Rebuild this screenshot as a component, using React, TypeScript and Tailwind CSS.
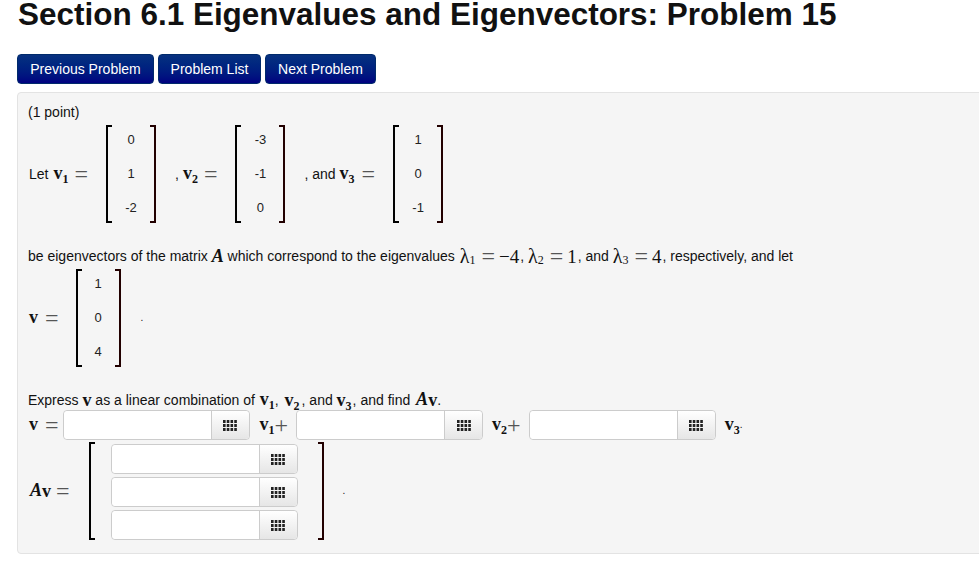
const serif = "font-['Liberation_Serif',serif] text-[#111]";

function V({ n }: { n?: number }) {
  return (
    <span className={`${serif} font-bold text-[18px] leading-none whitespace-nowrap`}>
      v{n ? <span className="relative top-[4px] text-[12px]">{n}</span> : null}
    </span>
  );
}

function A() {
  return <span className={`${serif} italic font-bold text-[18px] leading-none`}>A</span>;
}

function Eq({ className = "" }: { className?: string }) {
  return <span className={`${serif} text-[24px] leading-none text-[#555] ${className}`}>=</span>;
}

function Plus() {
  return <span className={`${serif} text-[24px] leading-none text-[#555]`}>+</span>;
}

function Lam({ n, val }: { n: number; val: string }) {
  return (
    <span className={`${serif} flex items-center text-[19px] leading-none whitespace-nowrap`}>
      <span className="text-[20px]">λ</span>
      <span className="relative top-[4px] text-[12px]">{n}</span>
      <span className="ml-[6px] mr-[4px] text-[24px] text-[#555]">=</span>
      <span>{val}</span>
    </span>
  );
}

function Bracket({ side }: { side: "l" | "r" }) {
  return (
    <div
      className={
        side === "l"
          ? "w-[6px] h-full border-l-2 border-y-2 border-black"
          : "w-[6px] h-full border-r-2 border-y-2 border-[#200]"
      }
    />
  );
}

function Matrix({ rows, w }: { rows: string[]; w: number }) {
  return (
    <div className="flex h-[98px] items-stretch">
      <Bracket side="l" />
      <div className="flex flex-col justify-between text-center text-[13px] text-[#222] py-[5px]" style={{ width: w }}>
        {rows.map((r, i) => (
          <span key={i}>{r}</span>
        ))}
      </div>
      <Bracket side="r" />
    </div>
  );
}

function GridIcon() {
  const cells = [];
  for (let y = 0; y < 3; y++) {
    for (let x = 0; x < 4; x++) {
      cells.push(<rect key={`${x}-${y}`} x={x * 3.75} y={y * 4} width="2.6" height="3" fill="#222" />);
    }
  }
  return (
    <svg width="14" height="11" viewBox="0 0 14 11">
      {cells}
    </svg>
  );
}

function MathInput() {
  return (
    <div className="flex h-[30px] w-[187px] rounded-[4px] border border-[#ccc] bg-white">
      <input className="w-[147px] min-w-0 bg-white rounded-l-[4px] outline-none" />
      <div className="flex flex-1 items-center justify-center rounded-r-[4px] border-l border-[#ccc] bg-gradient-to-b from-white to-[#e6e6e6]">
        <GridIcon />
      </div>
    </div>
  );
}

function NavButton({ label, w }: { label: string; w: number }) {
  return (
    <button
      className="h-[30px] rounded-[4px] border border-[#002a6b] bg-gradient-to-b from-[#08317f] to-[#000080] text-[14px] text-white"
      style={{ width: w }}
    >
      {label}
    </button>
  );
}

export default function App() {
  return (
    <div className="h-screen w-full overflow-hidden bg-white font-['Liberation_Sans',sans-serif] text-[14px] leading-[20px] text-[#111]">
      <h2 className="ml-[18px] text-[31.48px] font-bold leading-[30px] whitespace-nowrap text-[#111]">
        Section 6.1 Eigenvalues and Eigenvectors: Problem 15
      </h2>

      <div className="ml-[17px] mt-[24px] flex gap-[4px]">
        <NavButton label="Previous Problem" w={137} />
        <NavButton label="Problem List" w={103} />
        <NavButton label="Next Problem" w={111} />
      </div>

      <div className="ml-[17px] mt-[8px] w-[1000px] rounded-[4px] border border-[#e3e3e3] bg-[#f5f5f5] pl-[10px] pt-[9px] pb-[13px]">
        <div>(1 point)</div>

        <div className="mt-[3px] flex items-center">
          <span className="ml-[1px]">Let</span>
          <span className="ml-[5px]"><V n={1} /></span>
          <Eq className="ml-[6px]" />
          <div className="ml-[18px]"><Matrix rows={["0", "1", "-2"]} w={38} /></div>
          <span className="ml-[19px]">,</span>
          <span className="ml-[4px]"><V n={2} /></span>
          <Eq className="ml-[6px]" />
          <div className="ml-[18px]"><Matrix rows={["-3", "-1", "0"]} w={38} /></div>
          <span className="ml-[19px]">, and</span>
          <span className="ml-[4px]"><V n={3} /></span>
          <Eq className="ml-[7px]" />
          <div className="ml-[18px]"><Matrix rows={["1", "0", "-1"]} w={38} /></div>
        </div>

        <div className="mt-[23px] flex h-[20px] items-center whitespace-pre">
          <span>be eigenvectors of the matrix </span>
          <A />
          <span> which correspond to the eigenvalues </span>
          <span className="ml-[1px]" />
          <Lam n={1} val="−4" />
          <span className="ml-[1px]">, </span>
          <Lam n={2} val="1" />
          <span className="ml-[1px]">, and </span>
          <Lam n={3} val="4" />
          <span className="ml-[1px]">, respectively, and let</span>
        </div>

        <div className="mt-[3px] flex items-center">
          <span className="ml-[1px]"><V /></span>
          <Eq className="ml-[7px]" />
          <div className="ml-[17px]"><Matrix rows={["1", "0", "4"]} w={33} /></div>
          <span className="ml-[20px] text-[10px]">.</span>
        </div>

        <div className="mt-[23px] flex h-[20px] items-center whitespace-pre">
          <span>Express </span>
          <V />
          <span> as a linear combination of </span>
          <span className="ml-[1px]"><V n={1} /></span>
          <span className="mr-[2px]">, </span>
          <V n={2} />
          <span className="ml-[2px]">, and </span>
          <V n={3} />
          <span className="ml-[1px]">, and find </span>
          <span className="ml-[2px]"><A /></span>
          <V />
          <span>.</span>
        </div>

        <div className="flex items-center">
          <span className="ml-[1px]"><V /></span>
          <Eq className="ml-[7px]" />
          <div className="ml-[4px]"><MathInput /></div>
          <span className="ml-[10px]"><V n={1} /></span>
          <Plus />
          <div className="ml-[8px]"><MathInput /></div>
          <span className="ml-[9px]"><V n={2} /></span>
          <Plus />
          <div className="ml-[8px]"><MathInput /></div>
          <span className="ml-[9px]"><V n={3} /></span>
          <span className="text-[10px]">.</span>
        </div>

        <div className="mt-[2px] flex items-center">
          <span className="ml-[2px]"><A /></span>
          <V />
          <Eq className="ml-[5px]" />
          <div className="ml-[19px] flex h-[98px]">
            <Bracket side="l" />
            <div className="flex w-[223px] flex-col justify-between pt-[2px] pl-[16px]">
              <MathInput />
              <MathInput />
              <MathInput />
            </div>
            <Bracket side="r" />
          </div>
          <span className="ml-[19px] text-[10px]">.</span>
        </div>
      </div>
    </div>
  );
}
